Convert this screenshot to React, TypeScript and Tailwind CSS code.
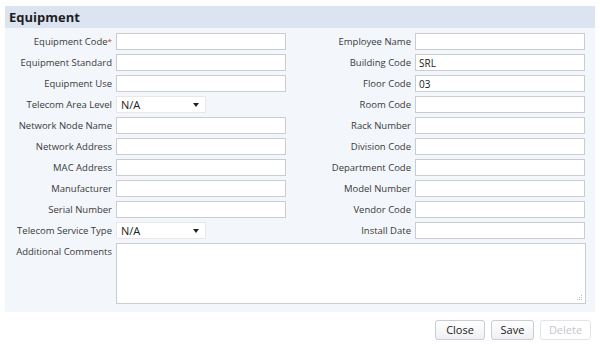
import React from 'react';

/* Equipment edit form */

const leftRows = [
  { label: 'Equipment Code', required: true },
  { label: 'Equipment Standard' },
  { label: 'Equipment Use' },
  { label: 'Telecom Area Level', select: 'N/A' },
  { label: 'Network Node Name' },
  { label: 'Network Address' },
  { label: 'MAC Address' },
  { label: 'Manufacturer' },
  { label: 'Serial Number' },
  { label: 'Telecom Service Type', select: 'N/A' },
];

const rightRows = [
  { label: 'Employee Name' },
  { label: 'Building Code', value: 'SRL' },
  { label: 'Floor Code', value: '03' },
  { label: 'Room Code' },
  { label: 'Rack Number' },
  { label: 'Division Code' },
  { label: 'Department Code' },
  { label: 'Model Number' },
  { label: 'Vendor Code' },
  { label: 'Install Date' },
];

type Row = { label: string; required?: boolean; select?: string; value?: string };

function Field({ row, labelW }: { row: Row; labelW: string }) {
  return (
    <div className="flex items-center h-[17px]">
      <label className={`${labelW} shrink-0 text-right pr-[4px] text-[9.5px] leading-none text-[#3a3a3a] whitespace-nowrap`}>
        {row.label}
        {row.required && <sup className="text-[#c0392b] text-[8px] relative -top-[1px]">*</sup>}
      </label>
      {row.select ? (
        <div className="w-[90px] h-[17px] bg-white border border-[#e6e8ec] flex items-center justify-between pl-[4px] pr-[6px]">
          <span className="text-[11px] text-[#222] leading-none">{row.select}</span>
          <svg width="6" height="4" viewBox="0 0 6 4">
            <path d="M0 0 L6 0 L3 4 Z" fill="#222" />
          </svg>
        </div>
      ) : (
        <input
          readOnly
          defaultValue={row.value ?? ''}
          className="w-[170px] h-[17px] bg-white border border-[#c9ccd3] px-[3px] text-[10px] text-[#222] outline-none"
        />
      )}
    </div>
  );
}

export default function App() {
  return (
    <div
      className="w-[600px] h-[344px] bg-white pt-[6px]"
      style={{ fontFamily: '"Open Sans", "DejaVu Sans", sans-serif' }}
    >
      <div className="mx-[5px] bg-[#f3f6fa]">
        <div className="h-[22px] bg-[#dce4f1] flex items-center pl-[4px]">
          <h2 className="text-[13px] font-bold text-[#1e1e1e] leading-none">Equipment</h2>
        </div>

        <div className="pt-[5px] pb-[8px]">
          <div className="flex">
            <div className="w-[295px] flex flex-col gap-[4px]">
              {leftRows.map((r) => (
                <Field key={r.label} row={r} labelW="w-[111px]" />
              ))}
            </div>
            <div className="flex flex-col gap-[4px]">
              {rightRows.map((r) => (
                <Field key={r.label} row={r} labelW="w-[115px]" />
              ))}
            </div>
          </div>

          <div className="flex mt-[4px]">
            <label className="w-[111px] shrink-0 text-right pr-[4px] text-[9.5px] leading-none text-[#3a3a3a] pt-[4px]">
              Additional Comments
            </label>
            <div className="relative">
              <textarea
                readOnly
                className="block w-[470px] h-[61px] bg-white border border-[#c9ccd3] outline-none text-[10px] resize-none"
              />
              {/* resize grip */}
              <svg className="absolute right-[3px] bottom-[3px]" width="6" height="6" viewBox="0 0 6 6">
                <rect x="4" y="0" width="1" height="1" fill="#b5b9c0" />
                <rect x="2" y="2" width="1" height="1" fill="#b5b9c0" />
                <rect x="4" y="2" width="1" height="1" fill="#b5b9c0" />
                <rect x="0" y="4" width="1" height="1" fill="#b5b9c0" />
                <rect x="2" y="4" width="1" height="1" fill="#b5b9c0" />
                <rect x="4" y="4" width="1" height="1" fill="#b5b9c0" />
              </svg>
            </div>
          </div>
        </div>
      </div>

      <div className="flex justify-end gap-[6px] pr-[9px] mt-[8px]">
        <button className="w-[50px] h-[20px] rounded-[3px] border border-[#c9ccd3] bg-gradient-to-b from-white to-[#eef0f3] text-[11px] text-[#222]">
          Close
        </button>
        <button className="w-[43px] h-[20px] rounded-[3px] border border-[#c9ccd3] bg-gradient-to-b from-white to-[#eef0f3] text-[11px] text-[#222]">
          Save
        </button>
        <button className="w-[51px] h-[20px] rounded-[3px] border border-[#e2e4e8] bg-white text-[11px] text-[#c3c6cc]">
          Delete
        </button>
      </div>
    </div>
  );
}
